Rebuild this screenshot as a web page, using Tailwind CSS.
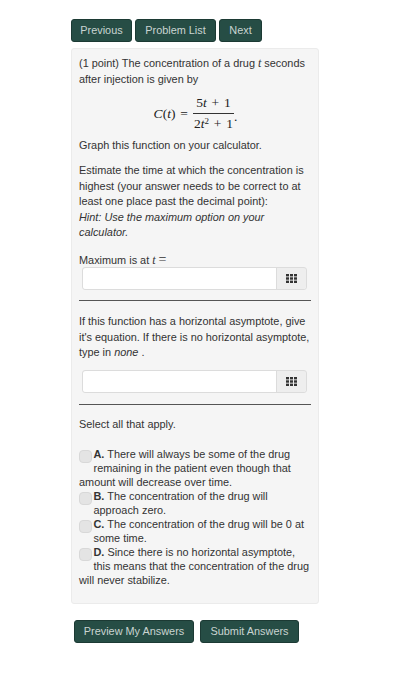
<!DOCTYPE html>
<html lang="en">
  <head>
    <meta charset="UTF-8" />
    <title>Problem</title>
    <script src="https://cdn.jsdelivr.net/npm/@tailwindcss/browser@4"></script>
  </head>
  <body class="bg-white font-['Liberation_Sans',sans-serif] text-[10.9px] leading-[15.5px] text-[#333]">
    <div class="w-[418px] h-[700px] pl-[71px] pt-[19px] overflow-hidden">
      <div class="flex gap-[3px]">
        <button class="h-[23px] w-[61px] rounded-[3px] bg-[#264d45] text-[#c9d4d1] border border-[#1c3a34]">Previous</button>
        <button class="h-[23px] w-[81px] rounded-[3px] bg-[#264d45] text-[#c9d4d1] border border-[#1c3a34]">Problem List</button>
        <button class="h-[23px] w-[43px] rounded-[3px] bg-[#264d45] text-[#c9d4d1] border border-[#1c3a34]">Next</button>
      </div>

      <div class="mt-[6px] w-[248px] h-[556px] bg-[#f5f5f5] border border-[#ebebeb] rounded-[3px] pl-[7px] pr-[6px] pt-[7px]">
        <p>(1 point) The concentration of a drug <i class="font-['Liberation_Serif',serif] text-[12px]">t</i> seconds<br />after injection is given by</p>

        <div class="mt-[8px] h-[37px] flex items-center justify-center gap-[5px] font-['Liberation_Serif',serif] text-[13.5px] text-[#222] [word-spacing:1.5px]">
          <span><i>C</i>(<i>t</i>)&nbsp;=</span>
          <span class="flex flex-col items-center leading-[16px]">
            <span class="px-[3px] pb-[2px] border-b border-[#333]">5<i>t</i> + 1</span>
            <span class="px-[1px] pt-[2px]">2<i>t</i><sup class="text-[9px] leading-none">2</sup> + 1</span>
          </span>
          <span class="-ml-[5px] mt-[6px]">.</span>
        </div>

        <p class="mt-[6px]">Graph this function on your calculator.</p>

        <p class="mt-[9.5px]">Estimate the time at which the concentration is highest (your answer needs to be correct to at least one place past the decimal point):<br /><i>Hint: Use the maximum option on your calculator.</i></p>

        <p class="mt-[11px]">Maximum is at <i class="font-['Liberation_Serif',serif] text-[12px]">t</i> <span class="font-['Liberation_Serif',serif] text-[14px]">=</span></p>

        <div class="-mt-[1px] ml-[3px] flex w-[225px] h-[23px] rounded-[3px] border border-[#dcdcdc] shadow-[inset_0_1px_1px_rgba(0,0,0,0.08)]">
          <div class="flex-1 bg-white rounded-l-[3px]"></div>
          <div class="w-[30px] bg-[#eeeeee] border-l border-[#dcdcdc] rounded-r-[3px] flex items-center justify-center">
            <svg width="11" height="9" viewBox="0 0 11 9" fill="#333"><rect x="0" y="0" width="3" height="2.4" /><rect x="4" y="0" width="3" height="2.4" /><rect x="8" y="0" width="3" height="2.4" /><rect x="0" y="3.3" width="3" height="2.4" /><rect x="4" y="3.3" width="3" height="2.4" /><rect x="8" y="3.3" width="3" height="2.4" /><rect x="0" y="6.6" width="3" height="2.4" /><rect x="4" y="6.6" width="3" height="2.4" /><rect x="8" y="6.6" width="3" height="2.4" /></svg>
          </div>
        </div>

        <hr class="mt-[10px] mr-[1px] border-t border-[#555]" />

        <p class="mt-[13px]">If this function has a horizontal asymptote, give it's equation. If there is no horizontal asymptote, type in <i>none</i> .</p>

        <div class="mt-[9px] ml-[3px] flex w-[225px] h-[23px] rounded-[3px] border border-[#dcdcdc] shadow-[inset_0_1px_1px_rgba(0,0,0,0.08)]">
          <div class="flex-1 bg-white rounded-l-[3px]"></div>
          <div class="w-[30px] bg-[#eeeeee] border-l border-[#dcdcdc] rounded-r-[3px] flex items-center justify-center">
            <svg width="11" height="9" viewBox="0 0 11 9" fill="#333"><rect x="0" y="0" width="3" height="2.4" /><rect x="4" y="0" width="3" height="2.4" /><rect x="8" y="0" width="3" height="2.4" /><rect x="0" y="3.3" width="3" height="2.4" /><rect x="4" y="3.3" width="3" height="2.4" /><rect x="8" y="3.3" width="3" height="2.4" /><rect x="0" y="6.6" width="3" height="2.4" /><rect x="4" y="6.6" width="3" height="2.4" /><rect x="8" y="6.6" width="3" height="2.4" /></svg>
          </div>
        </div>

        <hr class="mt-[11px] mr-[1px] border-t border-[#555]" />

        <p class="mt-[12px]">Select all that apply.</p>

        <div class="mt-[15px] leading-[14px]">
          <div class="flow-root">
            <span class="float-left w-[14.5px] h-[28px] pt-[3px]"><span class="block w-[13px] h-[13px] rounded-[4px] bg-[#e4e4e4] border border-[#d8d8d8]"></span></span>
            <b>A.</b> There will always be some of the drug remaining in the patient even though that amount will decrease over time.
          </div>
          <div class="flow-root">
            <span class="float-left w-[14.5px] h-[28px] pt-[3px]"><span class="block w-[13px] h-[13px] rounded-[4px] bg-[#e4e4e4] border border-[#d8d8d8]"></span></span>
            <b>B.</b> The concentration of the drug will approach zero.
          </div>
          <div class="flow-root">
            <span class="float-left w-[14.5px] h-[28px] pt-[3px]"><span class="block w-[13px] h-[13px] rounded-[4px] bg-[#e4e4e4] border border-[#d8d8d8]"></span></span>
            <b>C.</b> The concentration of the drug will be 0 at some time.
          </div>
          <div class="flow-root">
            <span class="float-left w-[14.5px] h-[28px] pt-[3px]"><span class="block w-[13px] h-[13px] rounded-[4px] bg-[#e4e4e4] border border-[#d8d8d8]"></span></span>
            <b>D.</b> Since there is no horizontal asymptote, this means that the concentration of the drug will never stabilize.
          </div>
        </div>
      </div>

      <div class="mt-[16px] ml-[3px] flex gap-[6px]">
        <button class="h-[23px] w-[120px] rounded-[3px] bg-[#264d45] text-[#c9d4d1] border border-[#1c3a34]">Preview My Answers</button>
        <button class="h-[23px] w-[99px] rounded-[3px] bg-[#264d45] text-[#c9d4d1] border border-[#1c3a34]">Submit Answers</button>
      </div>
    </div>
  </body>
</html>
